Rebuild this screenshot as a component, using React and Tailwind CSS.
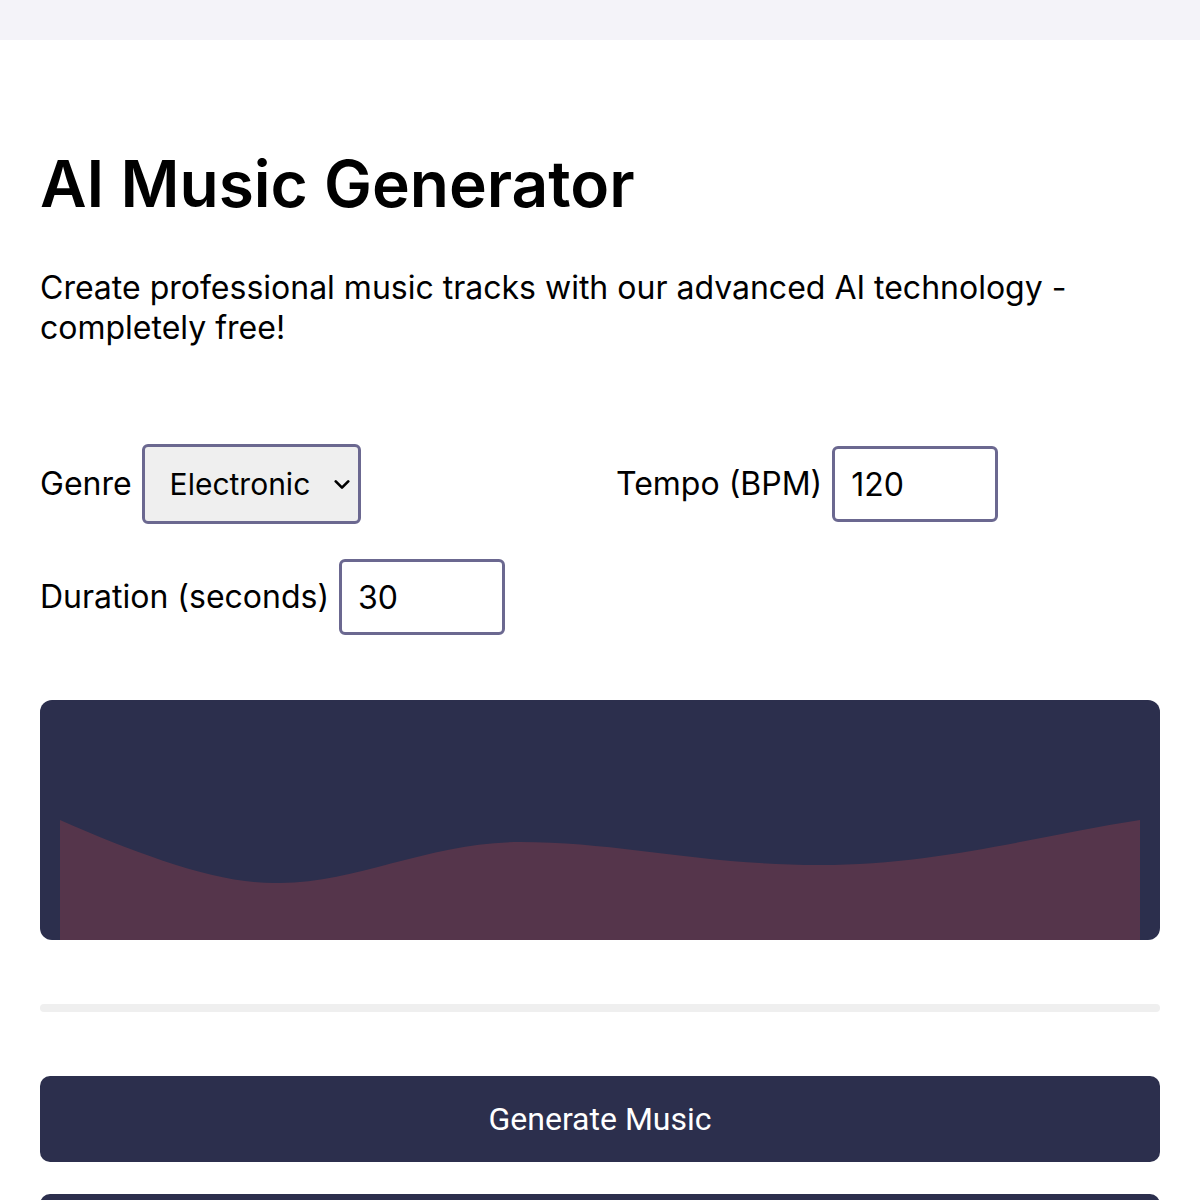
import React, { useState } from 'react';

const Field = ({ label, children }) => (
    <div className="flex items-center gap-[10px]">
        <label className="text-[32px] text-black">{label}</label>
        {children}
    </div>
);

const App = () => {
    const [genre, setGenre] = useState('Electronic');
    const [tempo, setTempo] = useState('120');
    const [duration, setDuration] = useState('30');

    return (
        <div className="min-h-screen bg-white font-['Inter',sans-serif] text-black">
            {/* Top strip */}
            <div className="h-[40px] bg-[#f4f3f9]" />

            <main className="px-[40px] pt-[104px]">
                <h1 className="text-[64px] font-semibold leading-[80px]">AI Music Generator</h1>
                <p className="mt-[44px] text-[32px] leading-[40px] max-w-[1100px]">
                    Create professional music tracks with our advanced AI technology - completely free!
                </p>

                {/* Controls */}
                <div className="mt-[96px] grid grid-cols-2 gap-x-[32px] gap-y-[35px]">
                    <Field label="Genre">
                        <div className="relative">
                            <select
                                value={genre}
                                onChange={(e) => setGenre(e.target.value)}
                                className="h-[80px] w-[219px] appearance-none rounded-[6px] border-[3px] border-[#6b6890] bg-[#efefef] pl-[25px] pr-[40px] text-[30px] outline-none"
                            >
                                <option>Electronic</option>
                                <option>Ambient</option>
                                <option>Hip Hop</option>
                                <option>Rock</option>
                                <option>Classical</option>
                            </select>
                            <svg
                                viewBox="0 0 18 11"
                                className="pointer-events-none absolute right-[11px] top-[35px] h-[11px] w-[16px]"
                                fill="none"
                                stroke="black"
                                strokeWidth="3"
                                strokeLinecap="round"
                                strokeLinejoin="round"
                            >
                                <path d="M2 2 L9 9 L16 2" />
                            </svg>
                        </div>
                    </Field>
                    <Field label="Tempo (BPM)">
                        <input
                            type="text"
                            value={tempo}
                            onChange={(e) => setTempo(e.target.value)}
                            className="h-[76px] w-[166px] rounded-[6px] border-[3px] border-[#6b6890] bg-white px-[16px] text-[32px] outline-none"
                        />
                    </Field>
                    <Field label="Duration (seconds)">
                        <input
                            type="text"
                            value={duration}
                            onChange={(e) => setDuration(e.target.value)}
                            className="h-[76px] w-[166px] rounded-[6px] border-[3px] border-[#6b6890] bg-white px-[16px] text-[32px] outline-none"
                        />
                    </Field>
                </div>

                {/* Waveform preview */}
                <div className="mt-[65px] h-[240px] overflow-hidden rounded-[12px] bg-[#2c2f4d] px-[20px] pt-[120px]">
                    <svg viewBox="0 0 1080 120" preserveAspectRatio="none" className="block h-[120px] w-full">
                        <path
                            d="M0 0 C 80 35, 160 65, 220 63 C 300 62, 370 22, 460 22 C 560 22, 640 45, 760 45 C 880 45, 980 15, 1080 0 L 1080 120 L 0 120 Z"
                            fill="#55354b"
                        />
                    </svg>
                </div>

                {/* Progress */}
                <div className="mt-[64px] h-[8px] w-full rounded-full bg-[#efefef]" />

                <button className="mt-[64px] h-[86px] w-full rounded-[10px] bg-[#2c2f4d] font-['Roboto',sans-serif] text-[32px] text-white">
                    Generate Music
                </button>
                <button className="mt-[32px] h-[86px] w-full rounded-[10px] bg-[#2c2f4d] font-['Roboto',sans-serif] text-[32px] text-white">
                    Download Track
                </button>
            </main>
        </div>
    );
};

export default App;
